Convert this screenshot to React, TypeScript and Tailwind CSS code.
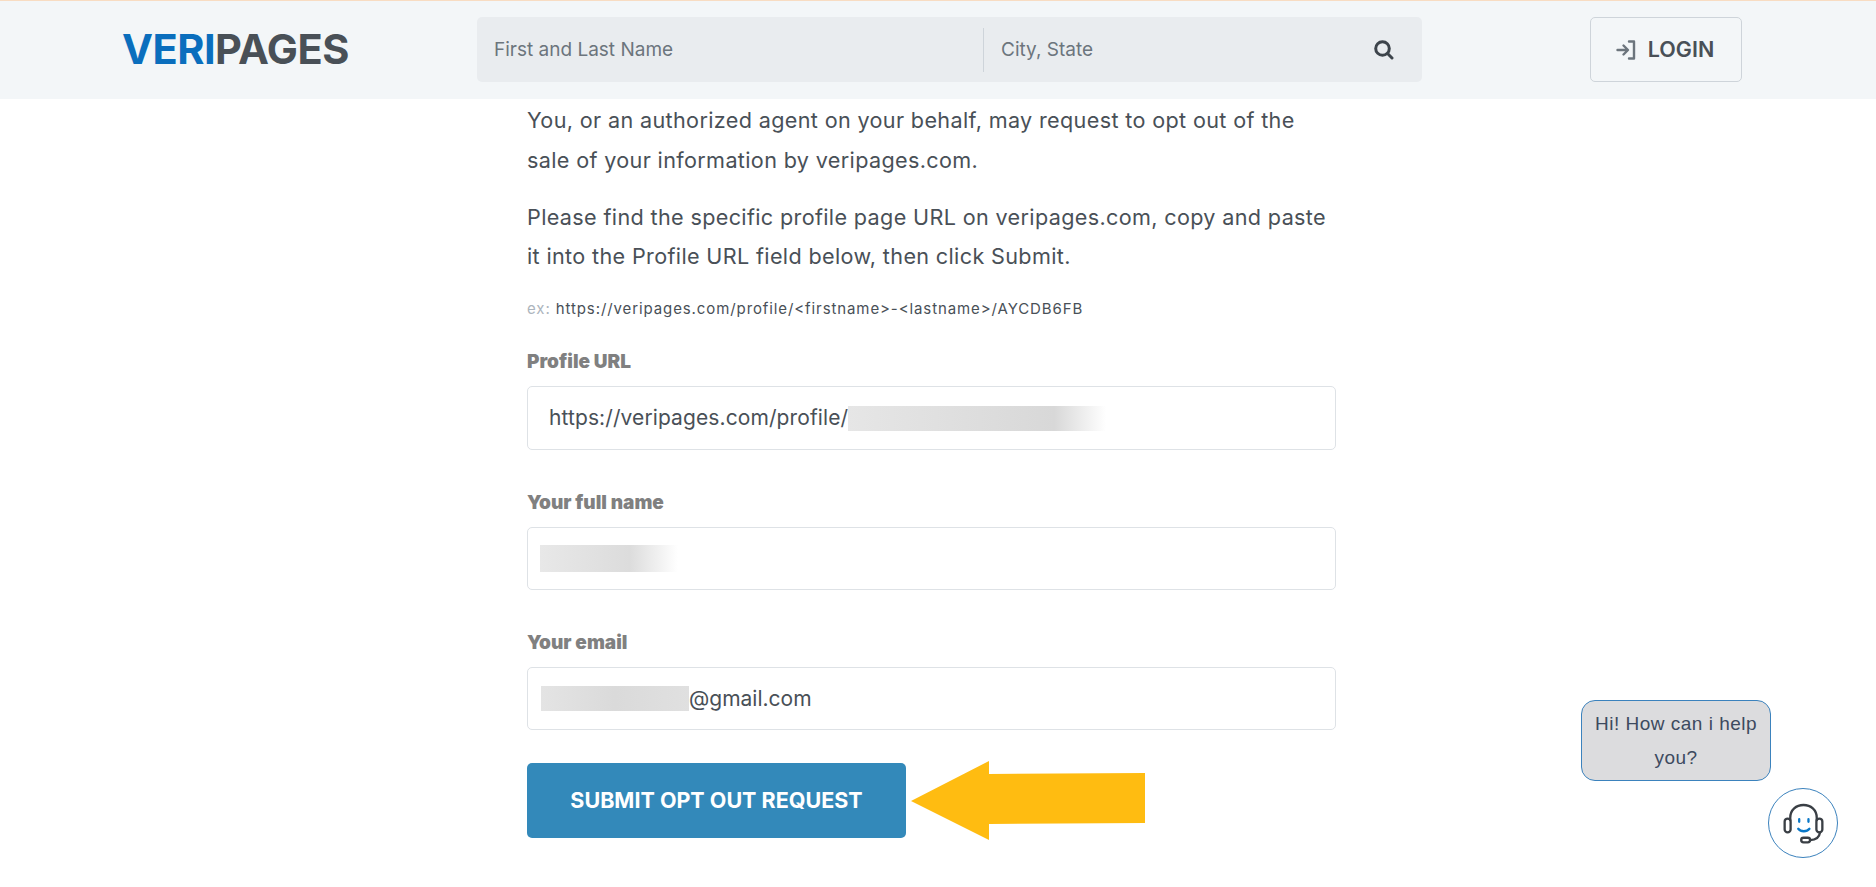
import * as React from 'react';

const Blur: React.FC<{ className: string }> = ({ className }) => (
  <span className={`block shrink-0 ${className}`} />
);

const Field: React.FC<{ label: string; className?: string; children: React.ReactNode }> = ({ label, className, children }) => (
  <div className={className}>
    <label className="block text-[19px] leading-[24px] font-black text-[#808080]">{label}</label>
    <div className="mt-[12px] flex items-center w-full border border-[#dee2e6] rounded-[5px] bg-white text-[21px] tracking-[0.1px] text-[#495057]">
      {children}
    </div>
  </div>
);

const App: React.FC = () => {
  return (
    <div className="h-[887px] overflow-hidden bg-white font-['Inter',sans-serif] relative">
      {/* header */}
      <header className="h-[99px] bg-[#f3f6f8] border-t border-[#f8dcc2] flex items-center">
        <div className="w-[477px] pl-[122px] text-[41.5px] font-bold tracking-[-0.5px] leading-none">
          <span className="text-[#0a6ebd]">VERI</span>
          <span className="text-[#495057]">PAGES</span>
        </div>
        <div className="w-[945px] h-[65px] mb-[1px] bg-[#e9ecef] rounded-[5px] flex items-center">
          <input
            className="w-[506px] h-full pl-[17px] bg-transparent text-[19px] placeholder:text-[#6c757d] outline-none"
            placeholder="First and Last Name"
            readOnly
          />
          <div className="w-px h-[44px] bg-[#ced4da]" />
          <input
            className="flex-1 h-full pl-[17px] bg-transparent text-[19px] placeholder:text-[#6c757d] outline-none"
            placeholder="City, State"
            readOnly
          />
          <svg className="mr-[28px]" width="20" height="20" viewBox="0 0 20 20" fill="none" stroke="#3d444b" strokeWidth="3" strokeLinecap="round">
            <circle cx="8.5" cy="8.5" r="6.8" />
            <path d="M13.8 13.8 L18 18" />
          </svg>
        </div>
        <button className="ml-[168px] w-[152px] h-[65px] mb-[1px] pr-[2px] border border-[#ced4da] rounded-[5px] flex items-center justify-center gap-[12px] text-[21.5px] font-semibold text-[#495057]">
          <svg width="20" height="20" viewBox="0 0 20 20" fill="none" stroke="#6c757d" strokeWidth="2.4" strokeLinecap="round" strokeLinejoin="round">
            <path d="M1.5 10 H11 M7.5 5.5 L12 10 L7.5 14.5" />
            <path d="M13 1.5 H18 V18.5 H13" />
          </svg>
          LOGIN
        </button>
      </header>

      {/* opt out form */}
      <main className="w-[809px] ml-[527px] pt-[1px]">
        <p className="text-[21.6px] tracking-[0.35px] leading-[40px] text-[#495057]">
          You, or an authorized agent on your behalf, may request to opt out of the sale of your information by veripages.com.
        </p>
        <p className="mt-[18px] text-[21.6px] tracking-[0.35px] leading-[39px] text-[#495057]">
          Please find the specific profile page URL on veripages.com, copy and paste it into the Profile URL field below, then click Submit.
        </p>
        <p className="mt-[23px] text-[15px] tracking-[0.9px] leading-[20px] text-[#495057]">
          <span className="text-[#adb5bd]">ex: </span>
          {'https://veripages.com/profile/<firstname>-<lastname>/AYCDB6FB'}
        </p>

        <Field label="Profile URL" className="mt-[31px]">
          <div className="h-[62px] pl-[21px] flex items-center">
            https://veripages.com/profile/
            <Blur className="w-[258px] h-[25px] bg-gradient-to-r from-[#e6e6e6] via-[#d8d8d8] via-80% to-white" />
          </div>
        </Field>
        <Field label="Your full name" className="mt-[41px]">
          <div className="h-[61px] pl-[12px] flex items-center">
            <Blur className="w-[138px] h-[27px] bg-gradient-to-r from-[#e8e8e8] via-[#dcdcdc] via-65% to-white" />
          </div>
        </Field>
        <Field label="Your email" className="mt-[41px]">
          <div className="h-[61px] pl-[13px] flex items-center tracking-normal">
            <Blur className="w-[148px] h-[25px] bg-gradient-to-r from-[#e4e4e4] via-[#dadada] to-[#e0e0e0]" />
            @gmail.com
          </div>
        </Field>

        <div className="mt-[31px] flex items-center">
          <button className="w-[379px] h-[75px] rounded-[5px] bg-[#3389ba] text-white text-[21.5px] font-bold">
            SUBMIT OPT OUT REQUEST
          </button>
          <svg className="ml-[5px]" width="234" height="79" viewBox="0 0 234 79">
            <path d="M0 40 L78 0 L78 13 L234 12 L234 62 L78 63 L78 79 Z" fill="#ffbc11" />
          </svg>
        </div>
      </main>

      {/* chat widget */}
      <div className="absolute left-[1581px] top-[700px] w-[190px] h-[81px] rounded-[14px] border border-[#3b82bd] bg-[#dcdcde] text-center text-[19px] leading-[34px] text-[#3d4a5f] font-['Liberation_Sans',sans-serif] tracking-[0.5px] px-[8px] py-[6px]">
        Hi! How can i help you?
      </div>
      <div className="absolute left-[1768px] top-[788px] w-[70px] h-[70px] rounded-full border border-[#3b82bd] bg-white flex items-center justify-center">
        <svg width="43" height="41" viewBox="36 38 128 124" fill="none" strokeLinecap="round" strokeLinejoin="round">
          <path d="M60 90 V82 C60 58 78 44 100 44 C122 44 140 58 140 82 V90" stroke="#3a3f45" strokeWidth="7" />
          <rect x="43" y="85" width="18" height="42" rx="9" stroke="#3a3f45" strokeWidth="7" />
          <rect x="139" y="85" width="18" height="42" rx="9" stroke="#3a3f45" strokeWidth="7" />
          <path d="M150 127 C148 142 136 150 120 150" stroke="#3a3f45" strokeWidth="7" />
          <rect x="93" y="143" width="27" height="14" rx="7" stroke="#3a3f45" strokeWidth="7" />
          <path d="M87 87 V95 M115 87 V95" stroke="#0a78c8" strokeWidth="7" />
          <path d="M84 116 C92 126 110 126 118 116" stroke="#0a78c8" strokeWidth="7" />
        </svg>
      </div>
    </div>
  );
};

export default App;
